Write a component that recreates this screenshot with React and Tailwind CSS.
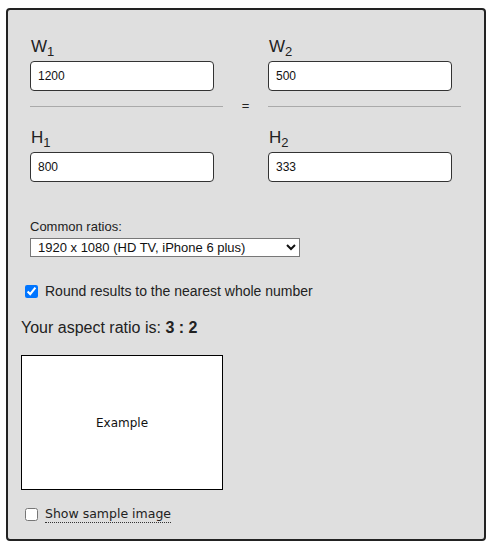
import React, { useState } from "react";

function Field({ letter, sub, value }) {
  return (
    <div className="flex flex-col">
      <div className="text-[17px] leading-[20px] text-[#222] pl-[1px] pt-[1px]">
        {letter}
        <span className="relative top-[4px] text-[13px]">{sub}</span>
      </div>
      <input
        defaultValue={value}
        className="mt-[3px] h-[30px] w-[184px] rounded-[4px] border border-[#333] bg-white px-[7px] text-[12px] text-[#111] outline-none"
        style={{ fontFamily: "Arial, 'Liberation Sans', sans-serif" }}
      />
    </div>
  );
}

export default function App() {
  const [round, setRound] = useState(true);
  const [sample, setSample] = useState(false);
  return (
    <div
      className="bg-white w-[492px] h-[546px] pt-[8px] pl-[6px]"
      style={{ fontFamily: "'Liberation Sans', Arial, sans-serif" }}
    >
      <div className="w-[480px] h-[533px] rounded-[4px] border-2 border-[#222] bg-[#dfdfdf] pl-[13px] pt-[26px]">
        {/* proportion grid: W1 / H1 = W2 / H2 */}
        <div className="grid grid-cols-[193px_45px_193px] pl-[9px]">
          <Field letter="W" sub="1" value="1200" />
          <div />
          <Field letter="W" sub="2" value="500" />
          <div className="mt-[15px] h-[1px] bg-[#aaa]" />
          <div className="mt-[8px] text-center text-[13px] leading-[14px] text-[#222]">=</div>
          <div className="mt-[15px] h-[1px] bg-[#aaa]" />
          <div className="mt-[14px]">
            <Field letter="H" sub="1" value="800" />
          </div>
          <div />
          <div className="mt-[14px]">
            <Field letter="H" sub="2" value="333" />
          </div>
        </div>

        <div className="mt-[37px] pl-[9px]">
          <div className="text-[13px] leading-[16px] text-[#222]">Common ratios:</div>
          <select className="mt-[1px] h-[19px] w-[270px] border border-[#777] bg-white pl-[3px] text-[13px] leading-[17px] text-[#111]">
            <option>1920 x 1080 (HD TV, iPhone 6 plus)</option>
          </select>
        </div>

        <label className="mt-[22px] ml-[4px] flex items-center gap-[7px] text-[14px] text-[#222]">
          <input
            type="checkbox"
            checked={round}
            onChange={(e) => setRound(e.target.checked)}
            className="h-[13px] w-[13px] accent-[#0075ff]"
          />
          Round results to the nearest whole number
        </label>

        <div className="mt-[16px] text-[16px] leading-[20px] text-[#222]">
          Your aspect ratio is: <b>3 : 2</b>
        </div>

        <div
          className="mt-[17px] flex h-[135px] w-[202px] items-center justify-center border border-black bg-white text-[12px] text-[#111]"
          style={{ fontFamily: "Tahoma, 'DejaVu Sans', sans-serif" }}
        >
          Example
        </div>

        <label
          className="mt-[16px] ml-[4px] flex items-center gap-[7px] text-[12.5px] text-[#222]"
          style={{ fontFamily: "Tahoma, 'DejaVu Sans', sans-serif" }}
        >
          <input
            type="checkbox"
            checked={sample}
            onChange={(e) => setSample(e.target.checked)}
            className="h-[13px] w-[13px]"
          />
          <span className="border-b border-dotted border-[#333] leading-[16px]">Show sample image</span>
        </label>
      </div>
    </div>
  );
}
